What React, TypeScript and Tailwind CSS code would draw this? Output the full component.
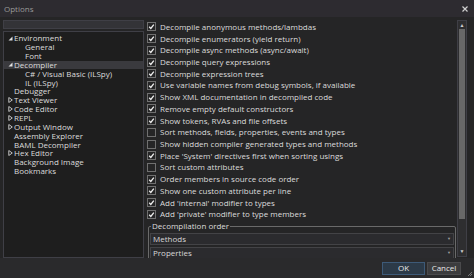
import React from "react";

const font = { fontFamily: '"Open Sans", "Noto Sans", sans-serif' };

const treeItems: { label: string; level: number; exp?: "open" | "closed"; selected?: boolean }[] = [
  { label: "Environment", level: 0, exp: "open" },
  { label: "General", level: 1 },
  { label: "Font", level: 1 },
  { label: "Decompiler", level: 0, exp: "open", selected: true },
  { label: "C# / Visual Basic (ILSpy)", level: 1 },
  { label: "IL (ILSpy)", level: 1 },
  { label: "Debugger", level: 0 },
  { label: "Text Viewer", level: 0, exp: "closed" },
  { label: "Code Editor", level: 0, exp: "closed" },
  { label: "REPL", level: 0, exp: "closed" },
  { label: "Output Window", level: 0, exp: "closed" },
  { label: "Assembly Explorer", level: 0 },
  { label: "BAML Decompiler", level: 0 },
  { label: "Hex Editor", level: 0, exp: "closed" },
  { label: "Background Image", level: 0 },
  { label: "Bookmarks", level: 0 },
];

const options: [string, boolean][] = [
  ["Decompile anonymous methods/lambdas", true],
  ["Decompile enumerators (yield return)", true],
  ["Decompile async methods (async/await)", true],
  ["Decompile query expressions", true],
  ["Decompile expression trees", true],
  ["Use variable names from debug symbols, if available", true],
  ["Show XML documentation in decompiled code", true],
  ["Remove empty default constructors", true],
  ["Show tokens, RVAs and file offsets", true],
  ["Sort methods, fields, properties, events and types", false],
  ["Show hidden compiler generated types and methods", false],
  ["Place 'System' directives first when sorting usings", true],
  ["Sort custom attributes", false],
  ["Order members in source code order", true],
  ["Show one custom attribute per line", true],
  ["Add 'internal' modifier to types", true],
  ["Add 'private' modifier to type members", true],
];

function Check({ on }: { on: boolean }) {
  return (
    <div className="w-[9px] h-[9px] border border-[#707070] bg-[#252526] flex items-center justify-center shrink-0">
      {on && (
        <svg width="7" height="7" viewBox="0 0 7 7">
          <path d="M1.2 3.8 L2.8 5.4 L5.8 1.6" stroke="#f0f0f0" strokeWidth="1.3" fill="none" />
        </svg>
      )}
    </div>
  );
}

function Dropdown({ label }: { label: string }) {
  return (
    <div className="h-[12px] border border-[#434346] bg-[#2b2b2e] flex items-center justify-between pl-[2px] pr-[2px] text-[#d8d8d8]">
      <span className="leading-none">{label}</span>
      <span className="text-[4px] text-[#a0a0a0] leading-none">▼</span>
    </div>
  );
}

export default function App() {
  return (
    <div
      className="w-[474px] h-[278px] bg-[#252526] flex flex-col overflow-hidden text-[8px] text-[#dcdcdc]"
      style={font}
    >
      {/* title bar */}
      <div className="h-[17px] bg-[#2d2b30] flex items-center justify-between pl-[4px] pr-[6px] shrink-0">
        <span className="text-[#9a9a9a]">Options</span>
        <svg width="6" height="6" viewBox="0 0 6 6">
          <path d="M0.5 0.5 L5.5 5.5 M5.5 0.5 L0.5 5.5" stroke="#d0d0d0" strokeWidth="1.2" />
        </svg>
      </div>

      {/* body */}
      <div className="flex-1 flex min-h-0">
        {/* left */}
        <div className="w-[144px] pl-[3px] pt-[3px] flex flex-col gap-[2px] shrink-0">
          <div className="h-[9px] bg-[#333337] border border-[#3f3f46]" />
          <div className="flex-1 bg-[#1e1e1e] border border-[#3f3f46] pt-[2px]">
            {treeItems.map((t) => (
              <div
                key={t.label}
                className={`h-[8.85px] flex items-center leading-none ${t.selected ? "bg-[#3a3a3e]" : ""}`}
              >
                <div className="w-[10px] flex justify-center shrink-0 pl-[3px]">
                  {t.exp === "open" && (
                    <svg width="5" height="5" viewBox="0 0 5 5">
                      <path d="M4.5 0.5 L4.5 4.5 L0.5 4.5 Z" fill="#e0e0e0" />
                    </svg>
                  )}
                  {t.exp === "closed" && (
                    <svg width="5" height="6" viewBox="0 0 5 6">
                      <path d="M0.8 0.5 L4.3 3 L0.8 5.5 Z" fill="none" stroke="#d0d0d0" strokeWidth="0.9" />
                    </svg>
                  )}
                </div>
                <span className={t.level === 1 ? "pl-[11px]" : ""}>{t.label}</span>
              </div>
            ))}
          </div>
        </div>

        {/* right */}
        <div className="flex-1 flex min-w-0 pt-[3px]">
          <div className="flex-1 flex flex-col pl-[3px] pr-[1px] min-w-0 overflow-hidden">
            <div className="pt-[1px]">
              {options.map(([label, on]) => (
                <div key={label} className="h-[11.73px] flex items-center gap-[4px] leading-none">
                  <Check on={on} />
                  <span className="whitespace-nowrap">{label}</span>
                </div>
              ))}
            </div>
            <div className="relative mt-[6px] ml-[1px] border border-[#6a6a6a] rounded-[2px] pt-[6px] px-[1px] flex flex-col gap-[2px]">
              <span className="absolute -top-[5px] left-[2px] bg-[#252526] px-[1px] leading-none text-[#dcdcdc]">
                Decompilation order
              </span>
              <Dropdown label="Methods" />
              <Dropdown label="Properties" />
            </div>
          </div>
          {/* scrollbar */}
          <div className="w-[10px] mr-[7px] mb-[1px] border border-[#3f3f46] bg-[#2e2e30] flex flex-col items-center shrink-0">
            <span className="text-[5px] text-[#cfcfcf] leading-none mt-[2px]">▲</span>
            <div className="w-[6px] h-[190px] bg-[#686868] mt-[1px]" />
            <div className="flex-1" />
            <span className="text-[5px] text-[#cfcfcf] leading-none mb-[2px]">▼</span>
          </div>
        </div>
      </div>

      {/* bottom bar */}
      <div className="h-[20px] bg-[#2a2a2c] flex items-center justify-end gap-[2px] pr-[13px] shrink-0 relative">
        <div className="w-[43px] h-[13px] bg-[#2c3a48] border border-[#3d5a78] flex items-center justify-center text-[#e8e8e8]">
          OK
        </div>
        <div className="w-[34px] h-[13px] bg-[#3c3c3e] border border-[#4a4a4c] flex items-center justify-center text-[#e8e8e8]">
          Cancel
        </div>
        <svg className="absolute right-[1px] bottom-[1px]" width="6" height="6" viewBox="0 0 6 6">
          <path d="M5 1 L1 5 M5 3 L3 5" stroke="#8a8a8a" strokeWidth="0.8" />
        </svg>
      </div>
    </div>
  );
}
